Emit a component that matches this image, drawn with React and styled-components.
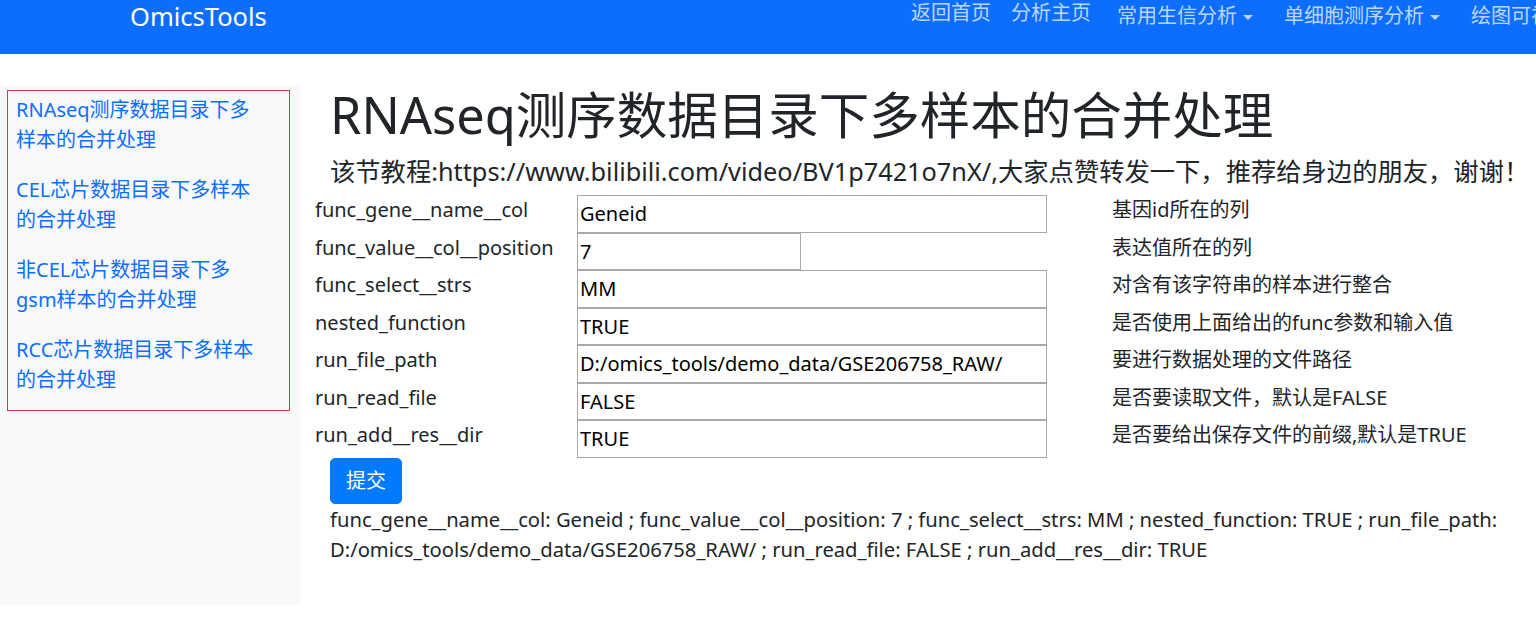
import React from "react";
import styled, { createGlobalStyle } from "styled-components";

const Global = createGlobalStyle`
  html, body { margin: 0; padding: 0; background: #fff; }
  body {
    font-family: "Noto Sans", "Noto Sans CJK SC", sans-serif;
    color: #212529;
    overflow-x: hidden;
  }
  * { box-sizing: border-box; }
`;

const NavBar = styled.header`
  height: 54px;
  background: #0d6efd;
  display: flex;
  align-items: flex-start;
  overflow: hidden;
  white-space: nowrap;
`;

const Brand = styled.a`
  margin: 1px 0 0 130px;
  font-size: 25.5px;
  line-height: 30px;
  color: #fff;
  text-decoration: none;
`;

const NavList = styled.nav`
  display: flex;
  align-items: flex-start;
  margin-left: auto;
  margin-right: -66px;
`;

const NavLink = styled.a`
  display: flex;
  align-items: center;
  font-size: 20px;
  line-height: 24px;
  color: #bcd5fe;
  text-decoration: none;
  margin-top: ${(p) => (p.$dropdown ? "4px" : "1px")};
  padding: ${(p) => (p.$dropdown ? "0 15px 0 16px" : "0 10px")};
`;

const Caret = styled.span`
  display: inline-block;
  margin-left: 6px;
  margin-top: 2px;
  width: 0;
  height: 0;
  border-top: 5px solid #bcd5fe;
  border-left: 5px solid transparent;
  border-right: 5px solid transparent;
`;

const Body = styled.div`
  display: flex;
  align-items: flex-start;
`;

const Sidebar = styled.aside`
  flex: 0 0 300px;
  height: 520px;
  margin-top: 31px;
  background: #f8f9fa;
  padding: 5px 10px 0 7px;
`;

const SideBox = styled.div`
  border: 1px solid #dc3545;
  padding: 4px 8px 15px 8px;
  display: flex;
  flex-direction: column;
  gap: 20px;
`;

const SideLink = styled.a`
  display: block;
  font-size: 20px;
  line-height: 30px;
  color: #0d6efd;
  text-decoration: none;
`;

const SideLine = styled.span`
  display: block;
  white-space: nowrap;
`;

const Main = styled.main`
  flex: 1;
  min-width: 0;
  padding: 31px 15px 0 30px;
`;

const Title = styled.h1`
  margin: 0;
  font-size: 50.5px;
  line-height: 60px;
  font-weight: 400;
  white-space: nowrap;
`;

const Subtitle = styled.h5`
  margin: 11px 0 0;
  font-size: 25.3px;
  line-height: 30px;
  font-weight: 400;
  white-space: nowrap;
`;

const FormGrid = styled.div`
  margin: 9px 0 0 -15px;
  display: grid;
  grid-template-columns: 262px 470px 1fr;
  grid-auto-rows: 37.5px;
`;

const Label = styled.div`
  font-size: 20px;
  line-height: 30px;
`;

const InputCell = styled.div`
  display: flex;
`;

const Input = styled.input`
  width: ${(p) => p.$w || "100%"};
  height: 37.5px;
  border: 1px solid #a9a9a9;
  border-radius: 0;
  padding: 0 2px;
  margin: 0;
  font-family: inherit;
  font-size: 20px;
  color: #000;
  background: #fff;
  outline: none;
`;

const Desc = styled.div`
  padding-left: 65px;
  font-size: 20px;
  line-height: 30px;
  white-space: nowrap;
`;

const SubmitButton = styled.button`
  display: block;
  margin-top: 0.5px;
  padding: 7px 15px;
  border: 1px solid #007bff;
  border-radius: 5px;
  background: #007bff;
  color: #fff;
  font-family: inherit;
  font-size: 20px;
  line-height: 30px;
  cursor: pointer;
`;

const Result = styled.p`
  margin: 0;
  font-size: 20.2px;
  line-height: 30px;
`;

const fields = [
  { name: "func_gene__name__col", value: "Geneid", desc: "基因id所在的列" },
  { name: "func_value__col__position", value: "7", desc: "表达值所在的列", w: "224px" },
  { name: "func_select__strs", value: "MM", desc: "对含有该字符串的样本进行整合" },
  { name: "nested_function", value: "TRUE", desc: "是否使用上面给出的func参数和输入值" },
  { name: "run_file_path", value: "D:/omics_tools/demo_data/GSE206758_RAW/", desc: "要进行数据处理的文件路径" },
  { name: "run_read_file", value: "FALSE", desc: "是否要读取文件，默认是FALSE" },
  { name: "run_add__res__dir", value: "TRUE", desc: "是否要给出保存文件的前缀,默认是TRUE" },
];

const sideLinks = [
  ["RNAseq测序数据目录下多", "样本的合并处理"],
  ["CEL芯片数据目录下多样本", "的合并处理"],
  ["非CEL芯片数据目录下多", "gsm样本的合并处理"],
  ["RCC芯片数据目录下多样本", "的合并处理"],
];

export default function App() {
  return (
    <>
      <Global />
      <NavBar>
        <Brand href="#">OmicsTools</Brand>
        <NavList>
          <NavLink href="#">返回首页</NavLink>
          <NavLink href="#">分析主页</NavLink>
          <NavLink href="#" $dropdown>常用生信分析<Caret /></NavLink>
          <NavLink href="#" $dropdown>单细胞测序分析<Caret /></NavLink>
          <NavLink href="#" $dropdown>绘图可视化<Caret /></NavLink>
        </NavList>
      </NavBar>
      <Body>
        <Sidebar>
          <SideBox>
            {sideLinks.map((lines) => (
              <SideLink key={lines.join("")} href="#">
                {lines.map((l) => (
                  <SideLine key={l}>{l}</SideLine>
                ))}
              </SideLink>
            ))}
          </SideBox>
        </Sidebar>
        <Main>
          <Title>RNAseq测序数据目录下多样本的合并处理</Title>
          <Subtitle>
            该节教程:https://www.bilibili.com/video/BV1p7421o7nX/,大家点赞转发一下，推荐给身边的朋友，谢谢！
          </Subtitle>
          <FormGrid>
            {fields.map((f) => (
              <React.Fragment key={f.name}>
                <Label>{f.name}</Label>
                <InputCell>
                  <Input defaultValue={f.value} $w={f.w} />
                </InputCell>
                <Desc>{f.desc}</Desc>
              </React.Fragment>
            ))}
          </FormGrid>
          <SubmitButton>提交</SubmitButton>
          <Result>
            {fields.map((f) => `${f.name}: ${f.value}`).join(" ; ")}
          </Result>
        </Main>
      </Body>
    </>
  );
}
